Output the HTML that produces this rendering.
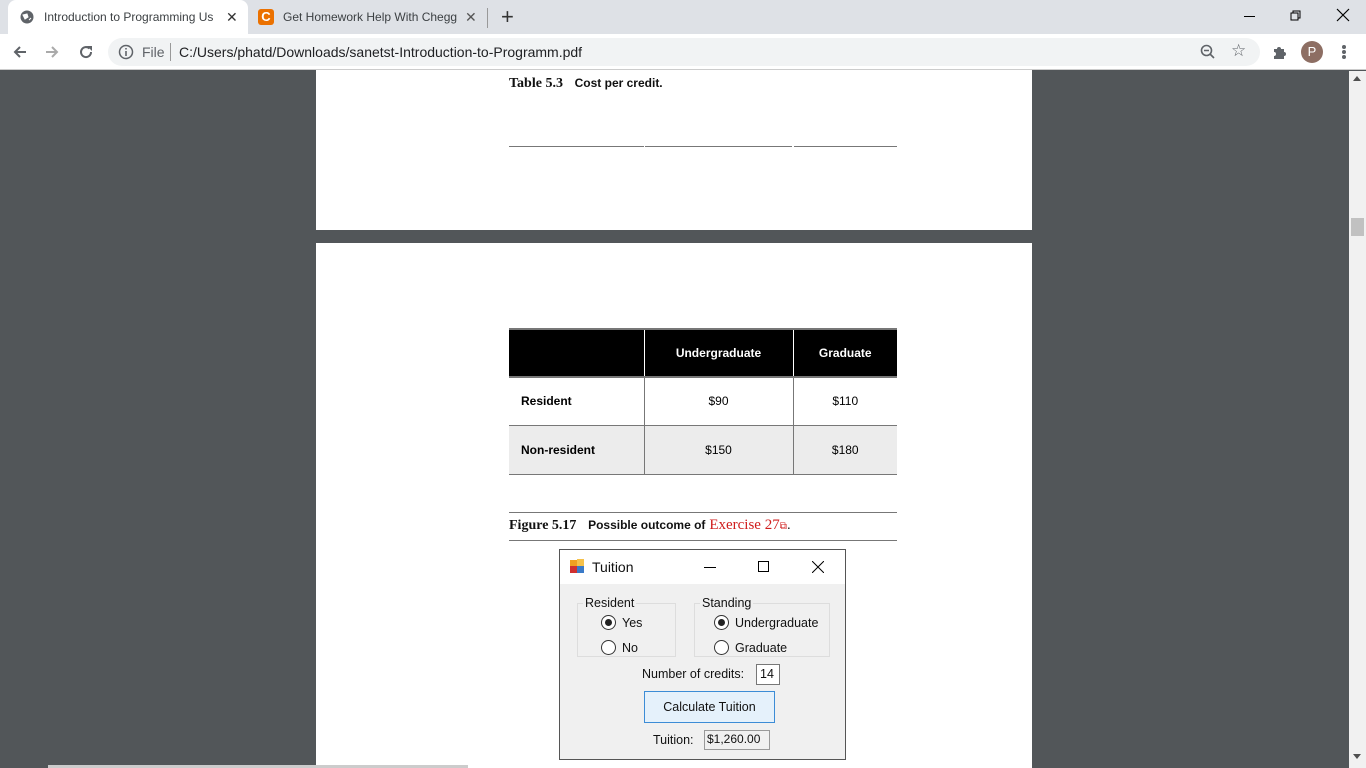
<!DOCTYPE html>
<html><head><meta charset="utf-8"><style>
*{margin:0;padding:0;box-sizing:border-box}
body{width:1366px;height:768px;overflow:hidden;background:#525659;font-family:"Liberation Sans",sans-serif;position:relative}
.abs{position:absolute}
.tabs{left:0;top:0;width:1366px;height:34px;background:#dee1e6}
.tab{top:0;height:34px;font-size:12px;color:#3c4043;line-height:34px;white-space:nowrap;overflow:hidden}
.tb{left:0;top:34px;width:1366px;height:36px;background:#fff;border-bottom:1px solid #ccc}
.omni{left:108px;top:38px;width:1152px;height:28px;background:#f1f3f4;border-radius:14px}
.page{background:#fff}
.serif{font-family:"Liberation Serif",serif}
td{border-right:1px solid #777;font-size:12px;text-align:center}
.dlg{font-size:12.5px;color:#111}
.radio{width:15px;height:15px;border:1px solid #333;border-radius:50%;background:#fff}
.radio.on::after{content:"";position:absolute;left:3px;top:3px;width:7px;height:7px;border-radius:50%;background:#222}
</style></head><body>
<div class="abs tabs"></div>
<div class="abs" style="left:8px;top:0;width:240px;height:34px;background:#fff;border-radius:8px 8px 0 0"></div>
<svg class="abs" style="left:20px;top:10px" width="14" height="14"><circle cx="7" cy="7" r="6.5" fill="#5f6368"/><path d="M3 5 L7 4 L8 7 L5 9 Z M9 10 L11 8" stroke="#fff" fill="#fff" stroke-width="1"/></svg>
<div class="abs tab" style="left:44px;width:175px">Introduction to Programming Us</div>
<div class="abs tab" style="left:226px;font-size:14px;color:#333">✕</div>
<div class="abs" style="left:258px;top:9px;width:16px;height:16px;background:#eb7100;border-radius:3px;color:#fff;font-weight:bold;font-size:13px;text-align:center;line-height:16px">C</div>
<div class="abs tab" style="left:283px;width:178px">Get Homework Help With Chegg</div>
<div class="abs tab" style="left:465px;font-size:14px;color:#555">✕</div>
<div class="abs" style="left:487px;top:8px;width:1px;height:20px;background:#999"></div>
<div class="abs tab" style="left:501px;font-size:22px;color:#333">+</div>
<div class="abs" style="left:1244px;top:16px;width:11px;height:1px;background:#000"></div>
<svg class="abs" style="left:1290px;top:10px" width="12" height="12"><rect x="1" y="3" width="7" height="7" fill="none" stroke="#000"/><path d="M3 3V1h7v7H8" fill="none" stroke="#000"/></svg>
<svg class="abs" style="left:1336px;top:8px" width="14" height="14"><path d="M1 1L13 13M13 1L1 13" stroke="#000" stroke-width="1.2"/></svg>
<div class="abs tb"></div>
<div class="abs omni"></div>
<svg class="abs" style="left:12px;top:44px" width="16" height="16"><path d="M14 8H3M8 3L3 8l5 5" stroke="#5f6368" stroke-width="2" fill="none"/></svg>
<svg class="abs" style="left:44px;top:44px" width="16" height="16"><path d="M2 8h11M8 3l5 5-5 5" stroke="#aaa" stroke-width="2" fill="none"/></svg>
<svg class="abs" style="left:78px;top:44px" width="16" height="16"><path d="M13 8A5 5 0 1 1 11.5 4.5" stroke="#5f6368" stroke-width="2" fill="none"/><path d="M9 2h5v5z" fill="#5f6368"/></svg>
<svg class="abs" style="left:118px;top:44px" width="16" height="16"><circle cx="8" cy="8" r="6.5" stroke="#5f6368" stroke-width="1.5" fill="none"/><path d="M8 7v5M8 4v1.5" stroke="#5f6368" stroke-width="1.6"/></svg>
<div class="abs" style="left:142px;top:44px;font-size:14px;color:#5f6368">File</div>
<div class="abs" style="left:170px;top:43px;width:1px;height:18px;background:#999"></div>
<div class="abs" style="left:179px;top:44px;font-size:14px;color:#202124">C:/Users/phatd/Downloads/sanetst-Introduction-to-Programm.pdf</div>
<svg class="abs" style="left:1200px;top:44px" width="16" height="16"><circle cx="6.5" cy="6.5" r="5" stroke="#5f6368" stroke-width="1.6" fill="none"/><path d="M4 6.5h5M10 10l4 4" stroke="#5f6368" stroke-width="1.6"/></svg>
<div class="abs" style="left:1231px;top:41px;font-size:17px;color:#5f6368">☆</div>
<svg class="abs" style="left:1272px;top:44px" width="16" height="16"><path d="M2 5h3a2 2 0 1 1 4 0h3v3a2 2 0 1 1 0 4v3H2v-3a2 2 0 1 0 0-4z" fill="#5f6368"/></svg>
<div class="abs" style="left:1301px;top:41px;width:22px;height:22px;border-radius:50%;background:#8d6e63;color:#fff;font-size:13px;text-align:center;line-height:22px">P</div>
<div class="abs" style="left:1342px;top:45px;width:4px;height:4px;border-radius:50%;background:#5f6368;box-shadow:0 5px 0 #5f6368,0 10px 0 #5f6368"></div>
<div class="abs" style="left:1349px;top:71px;width:17px;height:697px;background:#f1f1f1"></div>
<div class="abs" style="left:1351px;top:218px;width:13px;height:18px;background:#c1c1c1"></div>
<div class="abs" style="left:1353px;top:76px;border:4px solid transparent;border-bottom:5px solid #505050;border-top:0"></div>
<div class="abs" style="left:1353px;top:754px;border:4px solid transparent;border-top:5px solid #505050;border-bottom:0"></div>
<div class="abs page" style="left:316px;top:70px;width:716px;height:160px"></div>
<div class="abs" style="left:509px;top:74px;font-size:14px;color:#111;white-space:nowrap"><span class="serif" style="font-weight:bold">Table 5.3</span>&nbsp;&nbsp; <b style="font-size:12px">Cost per credit.</b></div>
<div class="abs" style="left:509px;top:146px;width:135px;height:1px;background:#777"></div>
<div class="abs" style="left:645px;top:146px;width:147px;height:1px;background:#777"></div>
<div class="abs" style="left:794px;top:146px;width:103px;height:1px;background:#777"></div>
<div class="abs page" style="left:316px;top:243px;width:716px;height:525px"></div>
<table class="abs" style="left:509px;top:328px;width:388px;border-collapse:collapse;border-top:2px solid #777">
<tr style="background:#000;color:#fff;height:48px;font-weight:bold"><td style="width:135px;border-right-color:#fff"></td><td style="width:149px;border-right-color:#fff">Undergraduate</td><td style="border:0">Graduate</td></tr>
<tr style="height:48px;border-top:2px solid #777"><td style="text-align:left;padding-left:12px;font-weight:bold">Resident</td><td>$90</td><td style="border:0">$110</td></tr>
<tr style="height:49px;background:#ececec;border-top:1px solid #777;border-bottom:1px solid #777"><td style="text-align:left;padding-left:12px;font-weight:bold">Non-resident</td><td>$150</td><td style="border:0">$180</td></tr>
</table>
<div class="abs" style="left:509px;top:512px;width:388px;height:1px;background:#777"></div>
<div class="abs" style="left:509px;top:516px;font-size:14px;color:#111;white-space:nowrap"><span class="serif" style="font-weight:bold">Figure 5.17</span>&nbsp;&nbsp; <b style="font-size:12px">Possible outcome of</b> <span class="serif" style="color:#d01c1c;font-size:15px">Exercise 27</span><span style="color:#d01c1c;font-size:10px">⧉</span>.</div>
<div class="abs" style="left:509px;top:540px;width:388px;height:1px;background:#777"></div>
<div class="abs dlg" style="left:559px;top:549px;width:287px;height:211px;background:#f0f0f0;border:1px solid #555">
<div class="abs" style="left:0;top:0;width:285px;height:34px;background:#fff"></div>
<div class="abs" style="left:10px;top:10px;width:7px;height:7px;background:#f0a020"></div><div class="abs" style="left:17px;top:9px;width:7px;height:7px;background:#f6c14a"></div><div class="abs" style="left:10px;top:16px;width:7px;height:7px;background:#d03030"></div><div class="abs" style="left:17px;top:16px;width:7px;height:7px;background:#3a7ac8"></div>
<div class="abs" style="left:32px;top:9px;font-size:14px">Tuition</div>
<div class="abs" style="left:144px;top:17px;width:12px;height:1px;background:#000"></div>
<div class="abs" style="left:198px;top:11px;width:11px;height:11px;border:1px solid #000"></div>
<svg class="abs" style="left:252px;top:11px" width="12" height="12"><path d="M0 0L12 12M12 0L0 12" stroke="#000"/></svg>
<div class="abs" style="left:17px;top:53px;width:99px;height:54px;border:1px solid #ddd"></div>
<div class="abs" style="left:23px;top:46px;background:#f0f0f0;padding:0 2px">Resident</div>
<div class="abs radio on" style="left:41px;top:65px"></div><div class="abs" style="left:62px;top:66px">Yes</div>
<div class="abs radio" style="left:41px;top:90px"></div><div class="abs" style="left:62px;top:91px">No</div>
<div class="abs" style="left:134px;top:53px;width:136px;height:54px;border:1px solid #ddd"></div>
<div class="abs" style="left:140px;top:46px;background:#f0f0f0;padding:0 2px">Standing</div>
<div class="abs radio on" style="left:154px;top:65px"></div><div class="abs" style="left:175px;top:66px;background:#f0f0f0">Undergraduate</div>
<div class="abs radio" style="left:154px;top:90px"></div><div class="abs" style="left:175px;top:91px">Graduate</div>
<div class="abs" style="left:82px;top:117px">Number of credits:</div>
<div class="abs" style="left:196px;top:114px;width:24px;height:21px;background:#fff;border:1px solid #777;padding:2px 3px">14</div>
<div class="abs" style="left:84px;top:141px;width:131px;height:32px;background:#e5f1fb;border:1px solid #3c8cd6;text-align:center;line-height:30px">Calculate Tuition</div>
<div class="abs" style="left:93px;top:183px">Tuition:</div>
<div class="abs" style="left:144px;top:180px;width:66px;height:20px;border:1px solid #999;padding:1px 2px;font-size:12px">$1,260.00</div>
</div>
<div class="abs" style="left:48px;top:765px;width:420px;height:3px;background:#ccc"></div>
</body></html>
